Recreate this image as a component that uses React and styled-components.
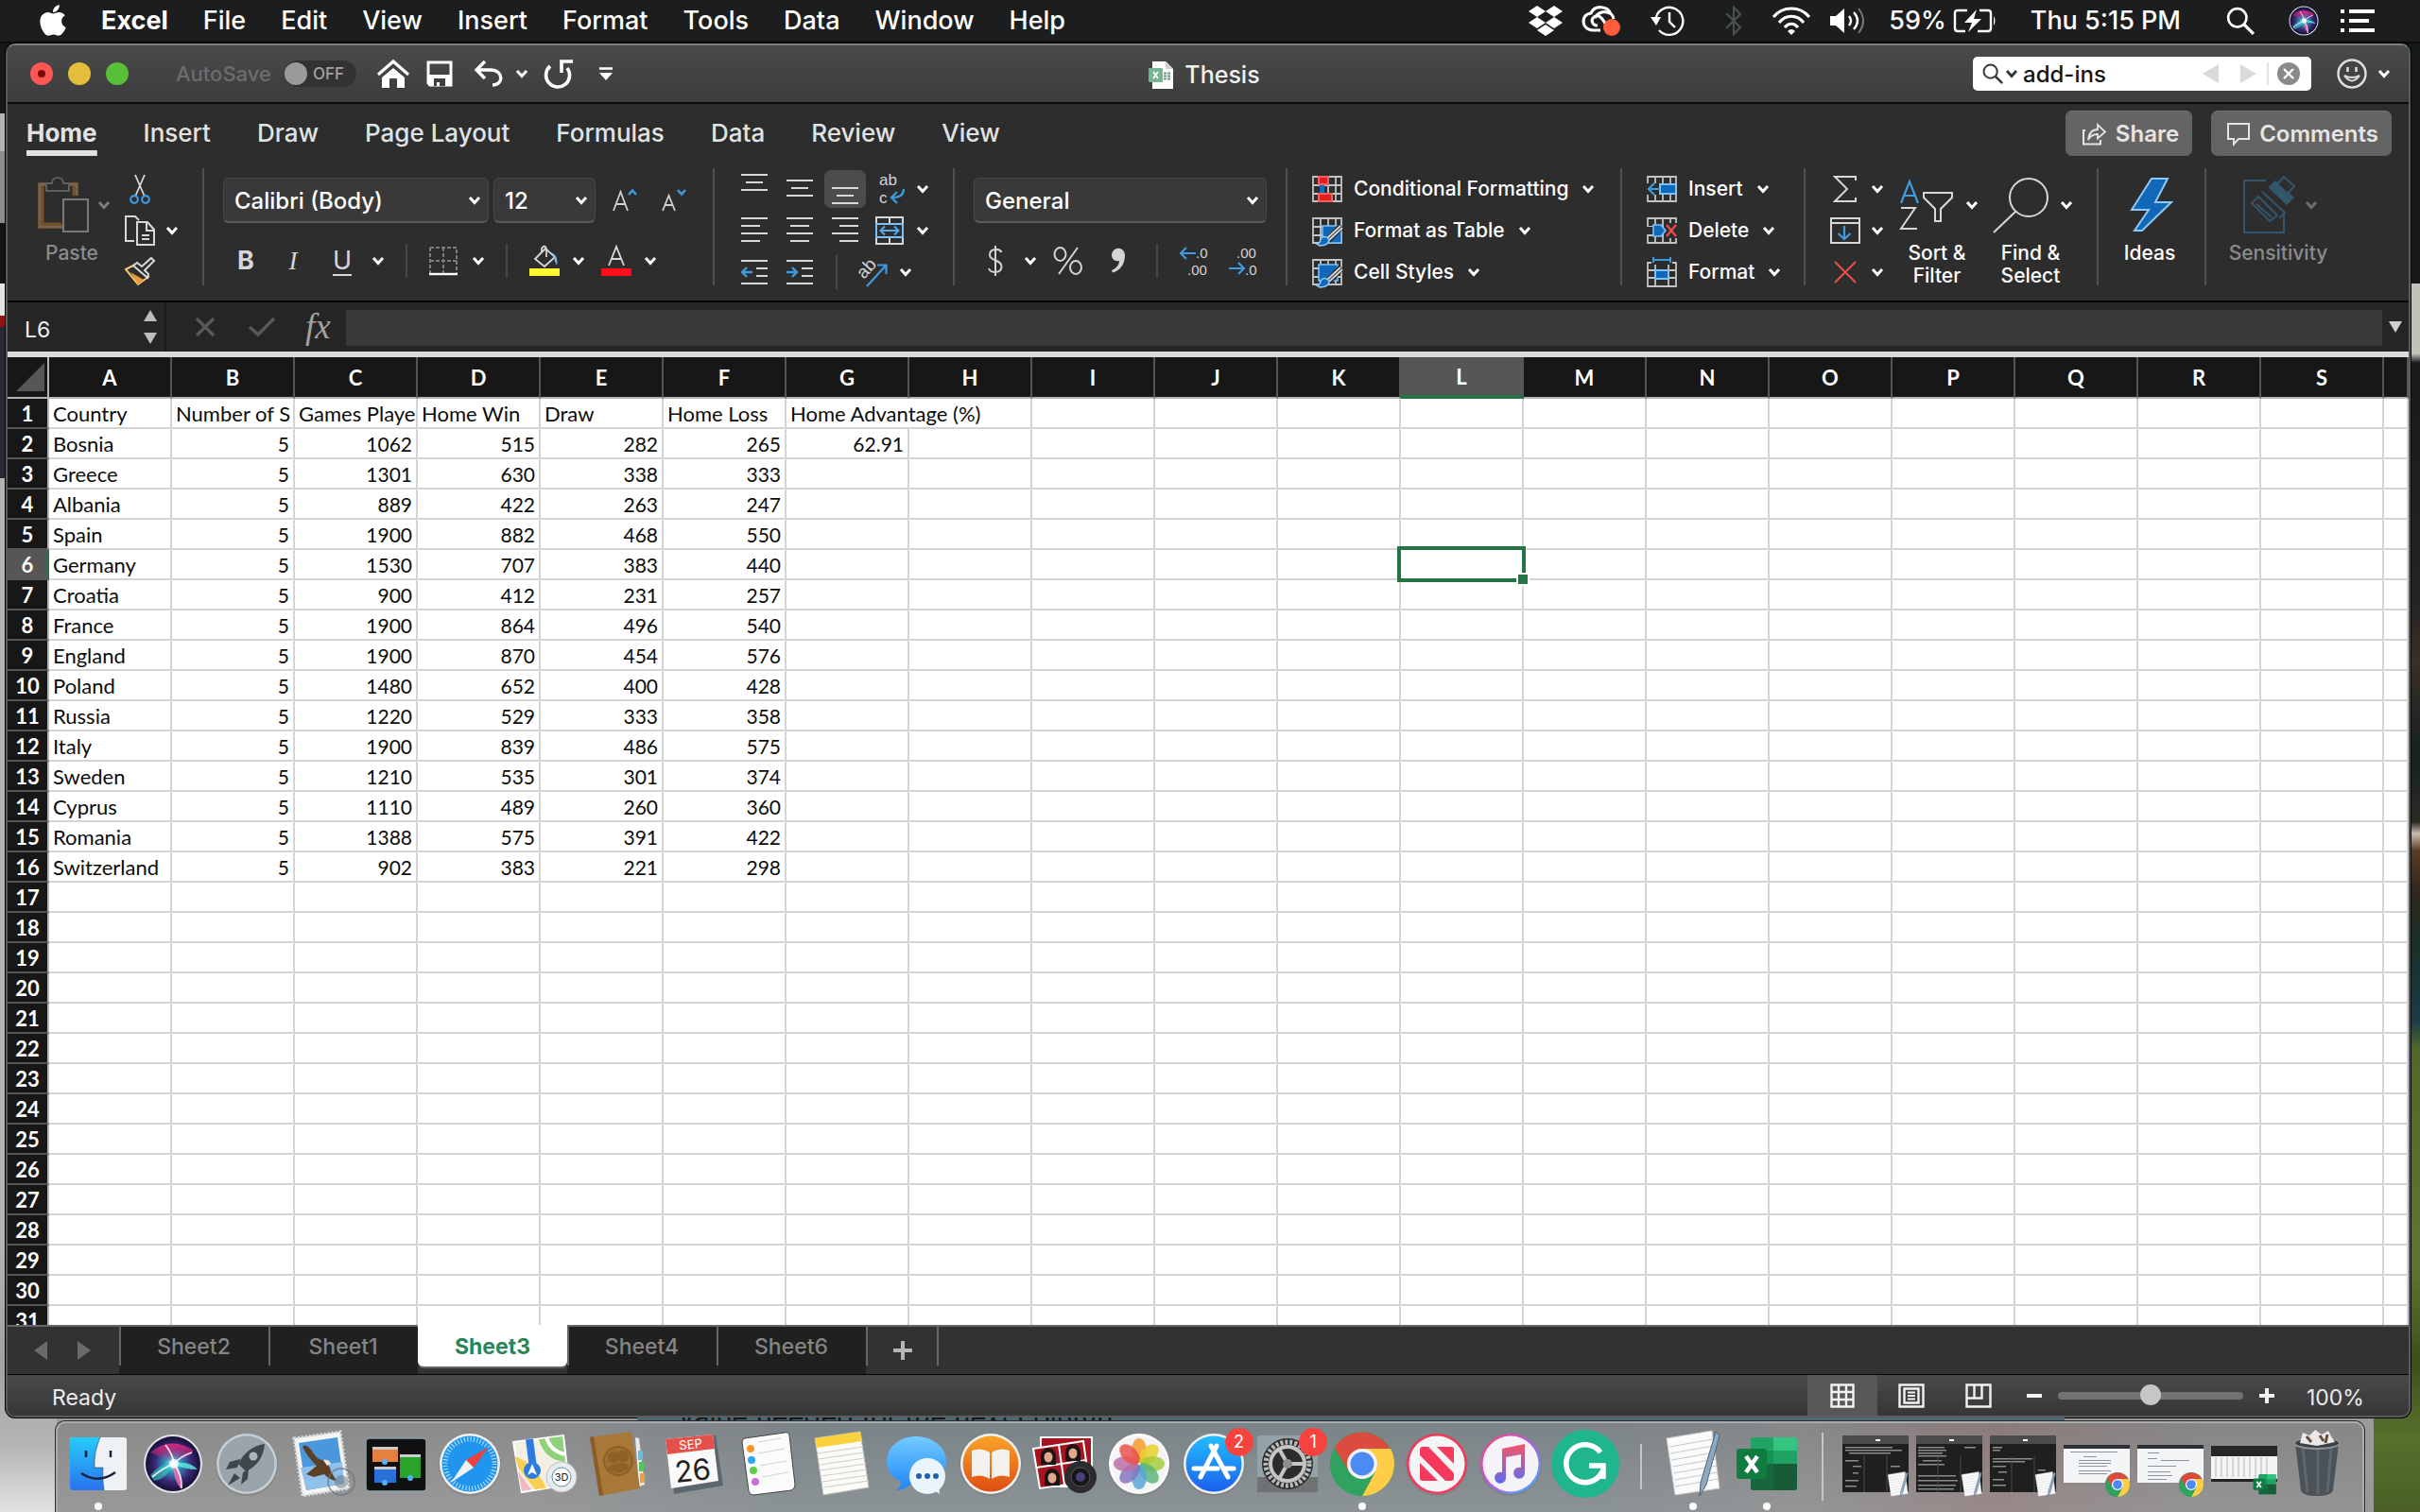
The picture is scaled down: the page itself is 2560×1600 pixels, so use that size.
import React from "react";
import styled, { createGlobalStyle, css } from "styled-components";

/* ---------- base ---------- */

const Global = createGlobalStyle`
  * { box-sizing: border-box; }
  html, body { margin: 0; padding: 0; }
  body {
    font-family: Inter, "Liberation Sans", sans-serif;
    color: #fff;
    background: #1a1d1e;
    overflow: hidden;
  }
  button, input, select {
    font: inherit;
    color: inherit;
    margin: 0;
    padding: 0;
    border: 0;
    background: none;
    outline: 0;
  }
  svg { display: block; flex: none; overflow: visible; }
`;

const Desktop = styled.div`
  display: flex;
  flex-direction: column;
  height: 100vh;
  background:
    linear-gradient(#15191b 0 120px, #b3b3b3 120px 160px, #8d8d8d 160px 236px, #141414 236px 300px, #e4e4e4 300px 334px, #8f1218 334px 346px, #262c31 346px 506px, #b4b4b4 506px 1300px, #a2a2a2 1440px, #b5b5b5 1530px, #e2e2e2 1600px) left / 60px 100% no-repeat,
    linear-gradient(#141818 0 300px, #c4c0bb 300px 374px, #17191a 384px, #262422 640px, #3a2e28 700px, #15211f 800px, #2c2b25 870px, #c9bfae 882px, #5e3d24 900px, #33261d 940px, #183027 1000px, #1c3a4a 1080px, #50682a 1110px, #62752f 1340px, #3f4e1c 1440px, #57702c 1520px, #4a6026 1600px) right / 49px 100% no-repeat,
    #9a9a9a;
`;

/* ---------- menu bar ---------- */

const MenuBar = styled.header`
  display: flex;
  align-items: center;
  justify-content: space-between;
  flex: none;
  height: 46px;
  padding: 0 46px 0 42px;
  background: #1b1d1e;
  border-bottom: 2px solid #0b0d0d;
`;

const MenuList = styled.nav`
  display: flex;
  align-items: center;
  gap: 37px;
  font-size: 27px;
  line-height: 44px;
`;

const MenuItem = styled.button`
  font-weight: ${(p) => (p.$strong ? 700 : 500)};
`;

const StatusItems = styled.div`
  display: flex;
  align-items: center;
  font-size: 27px;
  font-weight: 500;
  line-height: 44px;
`;

const StatusItem = styled.span`
  display: flex;
  align-items: center;
  margin-left: ${(p) => p.$gap || 0}px;
  white-space: nowrap;
`;

/* ---------- window ---------- */

const WindowFrame = styled.main`
  display: flex;
  flex-direction: column;
  flex: 1;
  min-height: 0;
  margin: 0 10px 0 6px;
  border: 2px solid #5c5c5c;
  border-top-color: #7e8080;
  border-radius: 10px;
  overflow: hidden;
  background: #2d2d2d;
  box-shadow: 0 0 0 1px #050505;
`;

const TitleBar = styled.div`
  display: grid;
  grid-template-columns: 1fr auto 1fr;
  align-items: center;
  flex: none;
  height: 62px;
  padding: 0 20px 0 24px;
  background: linear-gradient(#4a4a4a, #3c3c3c);
  border-bottom: 2px solid #0a0a0a;
`;

const TitleLeft = styled.div`
  display: flex;
  align-items: center;
`;

const Lights = styled.div`
  display: flex;
  gap: 16px;
`;

const Light = styled.button`
  display: grid;
  place-items: center;
  width: 24px;
  height: 24px;
  border-radius: 50%;
  background: ${(p) => p.$color};
`;

const LightDot = styled.span`
  width: 8px;
  height: 8px;
  border-radius: 50%;
  background: #7c0a05;
`;

const AutoSave = styled.label`
  display: flex;
  align-items: center;
  gap: 14px;
  width: 191px;
  margin-left: 50px;
  font-size: 22px;
  font-weight: 500;
  color: #6d6d6d;
`;

const Toggle = styled.span`
  display: grid;
  align-items: center;
  width: 78px;
  height: 28px;
  border-radius: 14px;
  background: #323232;
  font-size: 17px;
  color: #a3a3a3;
  & > * { grid-area: 1 / 1; }
`;

const ToggleInput = styled.input`
  appearance: none;
  width: 24px;
  height: 24px;
  border-radius: 50%;
  background: #9a9a9a;
`;

const ToggleText = styled.span`
  margin-left: 30px;
`;

const QuickTools = styled.div`
  display: flex;
  align-items: center;
  margin-left: 22px;
`;

const IconButton = styled.button`
  display: flex;
  align-items: center;
  justify-content: center;
  flex: none;
  gap: ${(p) => p.$gap || 0}px;
  width: ${(p) => (p.$w ? p.$w + "px" : "auto")};
  margin-left: ${(p) => p.$ml || 0}px;
`;

const DocTitle = styled.h1`
  display: flex;
  align-items: center;
  gap: 12px;
  margin: 0;
  padding: 2px 12px 0 0;
  font-size: 25px;
  font-weight: 500;
  line-height: 32px;
  color: #f2f2f2;
`;

const TitleRight = styled.div`
  display: flex;
  align-items: center;
  justify-content: flex-end;
`;

const SearchBox = styled.div`
  display: flex;
  align-items: center;
  width: 358px;
  height: 36px;
  padding: 0 12px 0 10px;
  border-radius: 5px;
  background: #fff;
  color: #141414;
`;

const SearchInput = styled.input`
  flex: 1;
  min-width: 0;
  margin-left: 6px;
  padding-top: 2px;
  font-size: 24px;
  font-weight: 500;
  line-height: 32px;
`;

const SearchRule = styled.span`
  width: 2px;
  height: 24px;
  margin: 0 9px 0 11px;
  background: #e2e2e2;
`;

/* ---------- ribbon ---------- */

const TabRow = styled.div`
  display: flex;
  align-items: center;
  justify-content: space-between;
  flex: none;
  height: 62px;
  padding: 0 18px 0 20px;
`;

const RibbonTabs = styled.nav`
  display: flex;
  gap: 49px;
  font-size: 26px;
  line-height: 36px;
`;

const RibbonTab = styled.button`
  padding: 6px 0 0;
  border-bottom: 6px solid transparent;
  font-weight: ${(p) => (p.$active ? 700 : 500)};
  color: #e2e2e2;
  ${(p) =>
    p.$active &&
    css`
      background: linear-gradient(#e2e0e2, #e2e0e2) bottom / 100% 6px no-repeat border-box;
    `}
`;

const TabActions = styled.div`
  display: flex;
  gap: 20px;
`;

const ActionButton = styled.button`
  display: flex;
  align-items: center;
  gap: 10px;
  height: 48px;
  padding: 0 14px 0 17px;
  border-radius: 7px;
  background: #646464;
  border-top: 1px solid #757575;
  font-size: 24px;
  font-weight: 600;
  color: #e4e4e4;
`;

const Ribbon = styled.div`
  display: flex;
  flex: none;
  height: 148px;
  padding-top: 6px;
  border-bottom: 2px solid #050505;
  font-size: 21px;
  font-weight: 500;
`;

const Group = styled.section`
  display: flex;
  flex: none;
  width: ${(p) => p.$w}px;
  padding-left: ${(p) => p.$pl || 0}px;
  justify-content: ${(p) => (p.$center ? "center" : "flex-start")};
`;

const GroupRule = styled.span`
  flex: none;
  width: 2px;
  height: 124px;
  background: #505050;
`;

const Column = styled.div`
  display: flex;
  flex-direction: column;
  margin-left: ${(p) => p.$ml || 0}px;
`;

const Line = styled.div`
  display: flex;
  align-items: center;
  height: 44px;
`;

const TallColumn = styled.div`
  display: flex;
  flex-direction: column;
  gap: 16px;
  padding-top: 10px;
`;

const TallLine = styled.div`
  display: flex;
  align-items: center;
  height: 48px;
`;

const SmallRule = styled.span`
  width: 2px;
  height: 36px;
  margin-left: ${(p) => p.$ml}px;
  background: #474747;
`;

const BigButton = styled.button`
  display: flex;
  flex-direction: column;
  align-items: center;
  flex: none;
  height: 132px;
  width: ${(p) => p.$w}px;
  margin-left: ${(p) => p.$ml || 0}px;
  line-height: 24px;
  color: ${(p) => (p.$dim ? "#8b8b8b" : "#fff")};
`;

const BigIcon = styled.span`
  display: flex;
  align-items: center;
  gap: ${(p) => p.$gap || 10}px;
  height: 78px;
`;

const BigLabel = styled.span`
  padding-right: 4px;
`;

const TextButton = styled.button`
  display: flex;
  align-items: center;
  gap: 12px;
  height: 44px;
  line-height: 28px;
  white-space: nowrap;
`;

const ButtonText = styled.span`
  margin-right: 3px;
`;

const AlignButton = styled.button`
  display: grid;
  place-items: center;
  width: 44px;
  height: 40px;
  margin: 0 2px;
  border-radius: 7px;
  background: ${(p) => (p.$on ? "#4c4c4c" : "transparent")};
`;

const LetterButton = styled.button`
  width: ${(p) => p.$w}px;
  font-size: 27px;
  line-height: 36px;
  color: #d6d6d6;
  font-weight: ${(p) => (p.$bold ? 700 : 400)};
  font-family: ${(p) => (p.$italic ? '"Liberation Serif", serif' : "inherit")};
  font-style: ${(p) => (p.$italic ? "italic" : "normal")};
  text-decoration: ${(p) => (p.$under ? "underline" : "none")};
  text-underline-offset: 5px;
`;

const SelectWrap = styled.span`
  display: grid;
  align-items: center;
  width: ${(p) => p.$w}px;
  height: 48px;
  margin-right: 5px;
  & > * { grid-area: 1 / 1; }
  & > svg { justify-self: end; margin-right: 9px; pointer-events: none; }
`;

const Select = styled.select`
  appearance: none;
  width: 100%;
  height: 48px;
  padding: 2px 30px 0 11px;
  border: 1px solid #474747;
  border-bottom: 2px solid #5a5a5a;
  border-radius: 6px;
  background: #393939;
  font-size: 24px;
  color: #fff;
`;

/* ---------- formula bar ---------- */

const FormulaBar = styled.div`
  display: flex;
  align-items: stretch;
  flex: none;
  height: 58px;
  background: #252525;
  border-bottom: 6px solid #dcdcdc;
`;

const NameBox = styled.div`
  display: flex;
  align-items: center;
  width: 168px;
  padding: 0 8px 0 18px;
  border-right: 2px solid #1b1b1b;
`;

const NameInput = styled.input`
  flex: 1;
  min-width: 0;
  font-size: 23px;
  padding-top: 6px;
  color: #f0f0f0;
`;

const FxText = styled.span`
  width: 30px;
  margin-left: 32px;
  font-family: "Liberation Serif", serif;
  font-style: italic;
  font-size: 37px;
  line-height: 44px;
  color: #a2a2a2;
`;

const FormulaTools = styled.div`
  display: flex;
  align-items: center;
  width: 190px;
  padding-left: 31px;
`;

const FormulaInput = styled.input`
  flex: 1;
  min-width: 0;
  height: 38px;
  margin-top: 8px;
  padding: 0 8px;
  background: #393939;
`;

const FormulaToggle = styled.button`
  display: grid;
  place-items: center;
  width: 28px;
`;

/* ---------- sheet ---------- */

const SheetArea = styled.div`
  flex: 1;
  min-height: 0;
  overflow: hidden;
  background: #fff;
`;

const Grid = styled.table`
  width: 100%;
  table-layout: fixed;
  border-collapse: separate;
  border-spacing: 0;
  font-family: Lato, "Open Sans", sans-serif;
  font-size: 22px;
  line-height: 28px;
  color: #0c0c0c;
`;

const Col = styled.col`
  width: ${(p) => (p.$w ? p.$w + "px" : "auto")};
`;

const Corner = styled.th`
  height: 44px;
  padding: 0;
  background: #171717;
  border-right: 2px solid #b5b5b5;
  border-bottom: 2px solid #b5b5b5;
  & > svg { margin-left: 9px; }
`;

const ColHead = styled.th`
  height: 44px;
  padding: 2px 0 0;
  font-weight: 700;
  color: #fff;
  background: ${(p) => (p.$on ? "#565656" : "#171717")};
  border-right: 2px solid #565656;
  border-bottom: ${(p) => (p.$on ? "4px solid #257347" : "2px solid #b5b5b5")};
`;

const RowHead = styled.th`
  height: 32px;
  padding: 2px 0 0;
  font-weight: 700;
  color: #fff;
  background: ${(p) => (p.$on ? "#565656" : "#171717")};
  border-right: 2px solid ${(p) => (p.$on ? "#257347" : "#b5b5b5")};
  border-bottom: 2px solid #565656;
`;

const Cell = styled.td`
  position: relative;
  height: 32px;
  padding: 2px ${(p) => (p.$num ? 4 : 0)}px 0 4px;
  border-right: 2px solid #d4d4d4;
  border-bottom: 2px solid #d4d4d4;
  font-size: ${(p) => (p.$num ? 21 : 22)}px;
  text-align: ${(p) => (p.$num ? "right" : "left")};
  white-space: nowrap;
  overflow: ${(p) => (p.$on ? "visible" : "hidden")};
`;

const Selection = styled.span`
  position: absolute;
  z-index: 1;
  inset: -4px;
  border: 4px solid #257347;
`;

const FillHandle = styled.span`
  position: absolute;
  z-index: 2;
  right: -6px;
  bottom: -6px;
  width: 10px;
  height: 10px;
  background: #257347;
  box-shadow: 0 0 0 2px #fff;
`;

/* ---------- sheet tabs and status ---------- */

const SheetTabs = styled.div`
  display: flex;
  flex: none;
  height: 52px;
  border-top: 2px solid #666;
  background: #323232;
`;

const TabNav = styled.div`
  display: flex;
  align-items: center;
  gap: 32px;
  width: 118px;
  padding-left: 28px;
`;

const SheetTab = styled.button`
  display: flex;
  justify-content: center;
  width: 158px;
  height: 50px;
  padding-top: 4px;
  font-size: 23px;
  font-weight: 500;
  line-height: 34px;
  color: #858585;
  background: linear-gradient(#666, #666) left top / 2px 41px no-repeat, #202020;
  ${(p) =>
    p.$active &&
    css`
      height: 44px;
      margin-top: -2px;
      padding-top: 6px;
      border-radius: 0 0 6px 6px;
      background: #fff;
      box-shadow: 0 2px 1px #686868;
      font-weight: 700;
      color: #2a8553;
    `}
`;

const AddTab = styled.button`
  display: grid;
  place-items: center;
  width: 77px;
  height: 50px;
  background:
    linear-gradient(#666, #666) left top / 2px 41px no-repeat,
    linear-gradient(#666, #666) right top / 2px 41px no-repeat;
`;

const StatusBar = styled.footer`
  display: flex;
  align-items: stretch;
  flex: none;
  height: 44px;
  padding: 0 46px 0 47px;
  border-top: 1px solid #050505;
  background: linear-gradient(#494949, #373737);
  font-size: 23px;
  line-height: 48px;
  color: #ececec;
`;

const Ready = styled.span`
  flex: 1;
`;

const ViewButton = styled.button`
  display: grid;
  place-items: center;
  width: ${(p) => (p.$on ? 74 : 71)}px;
  background: ${(p) => (p.$on ? "#575757" : "transparent")};
`;

const ZoomControl = styled.div`
  display: flex;
  align-items: center;
  gap: 17px;
  margin-left: 16px;
`;

const ZoomRange = styled.input`
  appearance: none;
  width: 196px;
  height: 22px;
  &::-webkit-slider-runnable-track {
    height: 8px;
    border-radius: 4px;
    background: #727272;
  }
  &::-webkit-slider-thumb {
    appearance: none;
    width: 22px;
    height: 22px;
    margin-top: -8px;
    border-radius: 50%;
    background: #c6c6c6;
  }
`;

const ZoomText = styled.output`
  width: 62px;
  margin-left: 34px;
  white-space: nowrap;
`;

/* ---------- dock ---------- */

const Behind = styled.div`
  flex: none;
  display: flex;
  align-items: flex-end;
  height: 4px;
  margin: 0 376px 0 674px;
  padding-left: 44px;
  overflow: hidden;
  background: #4b6974;
  font-size: 29px;
  line-height: 10px;
  color: #10181c;
`;

const DockRow = styled.div`
  display: flex;
  justify-content: center;
  flex: none;
  height: 96px;
`;

const Dock = styled.nav`
  display: flex;
  padding: 0 8px 0 4px;
  border: 2px solid #a9abac;
  border-bottom: 0;
  border-radius: 10px 10px 0 0;
  box-shadow: 0 0 0 1px #2c2c2c;
  background:
    linear-gradient(rgba(255, 255, 255, 0), rgba(255, 255, 255, 0.12)),
    linear-gradient(90deg, #8b8b8b 0 20%, #7b8488 32% 66%, #868788 76%, #8b7a7a 84%, #868686 93%);
`;

const DockApps = styled.div`
  display: flex;
  justify-content: space-between;
  width: 1651px;
`;

const DockItem = styled.button`
  position: relative;
  display: flex;
  align-items: flex-start;
  width: 78px;
  height: 94px;
  padding: 7px 3px 0;
`;

const Running = styled.span`
  position: absolute;
  left: 35px;
  bottom: 2px;
  width: 8px;
  height: 8px;
  border-radius: 50%;
  background: #fff;
`;

const Badge = styled.span`
  position: absolute;
  top: 5px;
  right: -3px;
  width: 30px;
  height: 30px;
  border-radius: 50%;
  background: #f7433e;
  font-size: 18px;
  line-height: 30px;
  text-align: center;
`;

const DockRule = styled.span`
  width: 2px;
  height: ${(p) => p.$h}px;
  margin: ${(p) => p.$m};
  background: #c3c6c7;
`;

/* ---------- icons ---------- */

const Svg = ({ w, h, children, ...rest }) => (
  <svg width={w} height={h} viewBox={`0 0 ${w} ${h}`} fill="none" aria-hidden="true" {...rest}>
    {children}
  </svg>
);

const Caret = ({ color = "#fff" }) => (
  <Svg w={12} h={8}>
    <path d="M1 1 L6 6.5 L11 1" stroke={color} strokeWidth="3" />
  </Svg>
);

const Rows = ({ h = 28, lines }) => (
  <Svg w={28} h={h}>
    {lines.map(([x, y, w], i) => (
      <rect key={i} x={x} y={y} width={w} height="2" fill="#d8d8d8" />
    ))}
  </Svg>
);

const Tri = ({ dir, w, h, color }) => {
  const d = {
    up: `0,${h} ${w / 2},0 ${w},${h}`,
    down: `0,0 ${w},0 ${w / 2},${h}`,
    left: `${w},0 0,${h / 2} ${w},${h}`,
    right: `0,0 ${w},${h / 2} 0,${h}`,
  }[dir];
  return (
    <Svg w={w} h={h}>
      <polygon points={d} fill={color} />
    </Svg>
  );
};

const AppleIcon = () => (
  <svg width="28" height="34" viewBox="0 0 384 470" fill="#fff" aria-hidden="true">
    <path d="M318.7 240c-.2-36.7 16.4-64.4 50-84.8-18.8-26.9-47.2-41.7-84.7-44.6-35.500-2.800-74.300 20.700-88.500 20.700-15 0-49.400-19.700-76.400-19.700C63.300 112.500 4 156.400 4 245.800q0 39.600 14.400 81.200c12.800 36.700 59 126.700 107.200 125.200 25.200-.6 43-17.900 75.800-17.900 31.800 0 48.300 17.900 76.400 17.900 48.600-.7 90.400-82.500 102.600-119.300-65.200-30.700-61.700-90-61.700-92.900zM262 75.500c27.300-32.400 24.800-61.900 24-72.500-24.100 1.400-52 16.400-67.900 34.900-17.500 19.800-27.800 44.300-25.600 71.900 26.100 2 49.900-11.400 69.500-34.300z" />
  </svg>
);

const DropboxIcon = () => (
  <Svg w={36} h={32}>
    <path d="M9 0l9 6-9 6-9-6zM27 0l9 6-9 6-9-6zM9 12l9 6-9 6-9-6zM27 12l9 6-9 6-9-6zM18 20l9 6-9 6-9-6z" fill="#fff" />
  </Svg>
);

const CloudIcon = () => (
  <Svg w={42} h={32}>
    <path d="M20 26H12C-1 25 -1 9 10 8C14 -1 28 0 31 9" stroke="#fff" strokeWidth="3.200" />
    <path d="M17 21C9 21 9 10 18 11C22 12 25 19 27 22M14 13C20 3 33 6 34 14" stroke="#fff" strokeWidth="3.200" />
    <circle cx="32" cy="23" r="9" fill="#ff5d3a" />
  </Svg>
);

const TimeMachineIcon = () => (
  <Svg w={38} h={32}>
    <path d="M6 12 A14.500 14.500 0 1 1 9 26" stroke="#fff" strokeWidth="2.400" />
    <path d="M0 12 h11 l-5 9z" fill="#fff" />
    <path d="M20 7 V17 L26 23" stroke="#fff" strokeWidth="2.400" />
  </Svg>
);

const BluetoothIcon = () => (
  <Svg w={20} h={32}>
    <path d="M2 8 L17 23 L10 30 V2 L17 9 L2 24" stroke="#4c4f50" strokeWidth="2.200" />
  </Svg>
);

const WifiIcon = () => (
  <Svg w={42} h={30}>
    <path d="M2 11 C12 -1 30 -1 40 11 M8 17 C15 8 27 8 34 17 M14 22 C18 17 24 17 28 22" stroke="#fff" strokeWidth="3.200" />
    <path d="M17 26 q4 -4 8 0 l-4 4z" fill="#fff" />
  </Svg>
);

const VolumeIcon = () => (
  <Svg w={36} h={28}>
    <path d="M0 9h6l9-8v26l-9-8H0z" fill="#fff" />
    <path d="M20 9 q4 5 0 10 M25 5 q8 9 0 18" stroke="#fff" strokeWidth="2.400" />
    <path d="M30 1 q10 13 0 26" stroke="#777" strokeWidth="2" />
  </Svg>
);

const BatteryIcon = () => (
  <Svg w={46} h={26}>
    <path d="M15 2H5q-3 0-3 3v16q0 3 3 3h8M28 2h9q3 0 3 3v16q0 3-3 3H26" stroke="#fff" strokeWidth="2.400" />
    <path d="M43 8q3 5 0 10z" fill="#fff" />
    <path d="M25 1 L12 15h8l-4 10 14-14h-8z" fill="#fff" />
  </Svg>
);

const SearchIcon = ({ s, color, width }) => (
  <svg width={s} height={s} viewBox="0 0 28 28" fill="none" aria-hidden="true">
    <circle cx="11" cy="11" r="9" stroke={color} strokeWidth={width} />
    <path d="M17.500 17.500 L27 27" stroke={color} strokeWidth={width + 0.600} />
  </svg>
);

const SiriOrb = ({ s, rim = 2 }) => (
  <svg width={s} height={s} viewBox="0 0 64 64" aria-hidden="true">
    <defs>
      <radialGradient id="siriBase">
        <stop offset="0" stopColor="#b8fff8" />
        <stop offset="0.300" stopColor="#2f93b9" />
        <stop offset="0.650" stopColor="#3b2a78" />
        <stop offset="1" stopColor="#150f34" />
      </radialGradient>
      <linearGradient id="siriPink" x1="0" y1="0" x2="0" y2="1">
        <stop offset="0" stopColor="#d6287f" />
        <stop offset="1" stopColor="#d6287f" stopOpacity="0" />
      </linearGradient>
    </defs>
    <circle cx="32" cy="32" r="31" fill="#dfe2e6" />
    <circle cx="32" cy="32" r={31 - rim} fill="url(#siriBase)" />
    <path d="M8 20 Q30 2 54 18 Q44 30 32 32 Q18 24 8 20z" fill="url(#siriPink)" />
    <path d="M8 44 Q20 30 32 32 Q26 48 12 50z" fill="#35d3c4" opacity="0.600" />
    <path d="M32 32 Q48 28 58 38 Q44 38 32 32z" fill="#5bf0e2" opacity="0.800" />
    <path d="M32 32 Q44 44 40 58 Q32 48 32 32z" fill="#ff6db4" opacity="0.800" />
    <path d="M24 12 Q32 22 33 32 Q40 24 52 20 M33 32 Q22 36 10 46 M33 32 Q42 44 41 58" stroke="#fff" strokeWidth="1.800" fill="none" opacity="0.850" />
    <circle cx="33" cy="32" r="5" fill="#fff" opacity="0.800" />
  </svg>
);

const ListIcon = () => (
  <Svg w={38} h={24}>
    <path d="M0 2h4M0 12h4M0 22h4M9 2h27M9 12h21M9 22h27" stroke="#fff" strokeWidth="4" />
  </Svg>
);

const HomeIcon = () => (
  <Svg w={34} h={30}>
    <path d="M1 16 L17 2 L33 16" stroke="#fff" strokeWidth="3.200" />
    <path d="M17 9 L29 19 V30 H21 V20 H13 V30 H5 V19z" fill="#fff" />
  </Svg>
);

const SaveIcon = () => (
  <Svg w={28} h={28}>
    <path d="M2 2 H26 V26 H4 L2 24z" stroke="#fff" strokeWidth="3" />
    <path d="M2 15h24v12H2z" fill="#fff" />
    <path d="M8 19h12v8h-6v-4h-3v4H8z" fill="#3f3f3f" />
  </Svg>
);

const UndoIcon = () => (
  <Svg w={32} h={28}>
    <path d="M12 1 L3 10 L12 19 M3 10 H18 C32 10 32 26 20 26" stroke="#fff" strokeWidth="3.400" />
  </Svg>
);

const RedoIcon = () => (
  <Svg w={32} h={30}>
    <path d="M7 7 A12.500 12.500 0 1 0 25 9" stroke="#fff" strokeWidth="3.600" />
    <path d="M31 2 H19 V14" stroke="#fff" strokeWidth="3.600" />
  </Svg>
);

const CustomizeIcon = () => (
  <Svg w={14} h={14}>
    <path d="M0 1.500h14" stroke="#fff" strokeWidth="2.500" />
    <path d="M0 6h14l-7 8z" fill="#fff" />
  </Svg>
);

const DocIcon = () => (
  <Svg w={26} h={29}>
    <path d="M4 0H18L26 8V29H4z" fill="#fff" />
    <path d="M18 0V8H26z" fill="#cfd6d2" />
    <rect y="7" width="15" height="15" rx="1" fill="#74b591" />
    <path d="M5 11 L10 18 M10 11 L5 18" stroke="#fff" strokeWidth="1.800" />
    <path d="M16 12.500h7M16 15.500h7M16 18.500h7" stroke="#5c9c7a" strokeWidth="2" strokeDasharray="3 1" />
  </Svg>
);

const SmileIcon = () => (
  <Svg w={32} h={32}>
    <circle cx="16" cy="16" r="14.500" stroke="#dcdcdc" strokeWidth="2.500" />
    <path d="M11.500 9v5M20.500 9v5" stroke="#dcdcdc" strokeWidth="2.600" />
    <path d="M8 18 q8 11 16 0 q-8 4 -16 0z" stroke="#dcdcdc" strokeWidth="2" />
  </Svg>
);

const ClearIcon = () => (
  <Svg w={24} h={24}>
    <circle cx="12" cy="12" r="12" fill="#8a8a8a" />
    <path d="M7 7l10 10M17 7L7 17" stroke="#fff" strokeWidth="2.400" />
  </Svg>
);

const ShareIcon = () => (
  <Svg w={26} h={24}>
    <path d="M4 8H2V22.500H20V18" stroke="#e4e4e4" strokeWidth="2" />
    <path d="M7 18 C8 10 12 7 17 7 V2 L25 9.500 L17 16.500 V12 C12 12 9 14 7 18z" stroke="#e4e4e4" strokeWidth="1.800" />
  </Svg>
);

const CommentIcon = () => (
  <Svg w={24} h={24}>
    <path d="M1 1H23V17H12L7 22.500V17H1z" stroke="#e4e4e4" strokeWidth="2" />
  </Svg>
);

const PasteIcon = () => (
  <Svg w={54} h={60}>
    <path d="M8 8H2V53H27M34 8H41V20" stroke="#7d6248" strokeWidth="3.400" />
    <path d="M5 10V50H25M38 10V20" stroke="#76502a" strokeWidth="3" />
    <path d="M9 15V7H15C15 -1 27 -1 27 7H33V15z" stroke="#5f5f5f" strokeWidth="2" />
    <rect x="27" y="24" width="26" height="34" stroke="#7a7a7a" strokeWidth="2" />
  </Svg>
);

const CutIcon = () => (
  <Svg w={32} h={32}>
    <path d="M11 1 L21 24 M21 1 L11 24" stroke="#d8d8d8" strokeWidth="1.800" />
    <circle cx="10" cy="27" r="3.800" stroke="#3f9ade" strokeWidth="2.200" />
    <circle cx="22" cy="27" r="3.800" stroke="#3f9ade" strokeWidth="2.200" />
  </Svg>
);

const CopyIcon = () => (
  <Svg w={32} h={32}>
    <path d="M10 27H1V1H11L15 5" stroke="#d8d8d8" strokeWidth="2" />
    <path d="M13 7H24L31 15V31H13z M23 7V16H31 M18 21h8M18 25h8" stroke="#d8d8d8" strokeWidth="2" />
  </Svg>
);

const PainterIcon = () => (
  <Svg w={32} h={32}>
    <path d="M1 13 L11 8 L25 21 L14 29z" stroke="#f3c77b" strokeWidth="2" />
    <path d="M6 16 L20 24 L14 29z" fill="#e89a3c" />
    <path d="M9 9 L13 6 L18 10 L28 1 L31 4 L21 14 L25 18 L24 22z" stroke="#d8d8d8" strokeWidth="2" fill="#2d2d2d" />
  </Svg>
);

const SizeIcon = ({ up }) => (
  <Svg w={26} h={24}>
    {up ? (
      <path d="M1 23 L8.500 3 L16 23 M4 16H13" stroke="#d0d0d0" strokeWidth="1.800" />
    ) : (
      <path d="M1 23 L7.500 7 L14 23 M4 17H12" stroke="#d0d0d0" strokeWidth="1.800" />
    )}
    <path d={up ? "M17 6 L21 1.500 L25 6" : "M17 1 L21 5.500 L25 1"} stroke="#3f9ade" strokeWidth="2.600" />
  </Svg>
);

const BordersIcon = () => (
  <Svg w={30} h={30}>
    <path d="M1 1H29V28M1 1V28M15 1V28M1 15H29" stroke="#7c7c7c" strokeWidth="2" strokeDasharray="4 2" />
    <path d="M0 29H30" stroke="#fff" strokeWidth="2.400" />
  </Svg>
);

const FillIcon = () => (
  <Svg w={32} h={32}>
    <path d="M6 14 L17 3 L27 12 L16 22z M13 8 V3 Q16 -2 18 3 V12" stroke="#d8d8d8" strokeWidth="1.800" />
    <path d="M22 7 Q31 9 29 21 Q26 16 26 11z" fill="#7db8ea" />
    <rect y="24" width="32" height="8" fill="#fdf734" />
  </Svg>
);

const FontColorIcon = () => (
  <Svg w={32} h={32}>
    <path d="M8 21 L16 1 L24 21 M11 14H21" stroke="#d8d8d8" strokeWidth="1.800" />
    <rect y="24" width="32" height="8" fill="#fb0d1b" />
  </Svg>
);

const IconLabel = styled.text`
  font-family: "Liberation Sans", sans-serif;
  font-size: ${(p) => p.$s || 15}px;
  font-weight: 400;
  fill: #d4d4d4;
`;

const WrapIcon = () => (
  <Svg w={28} h={32}>
    <IconLabel x="0" y="12" $s={17}>ab</IconLabel>
    <IconLabel x="0" y="31" $s={17}>c</IconLabel>
    <path d="M26 16 Q26 25 14 25 M19 19 L13 25 L19 31" stroke="#3f9ade" strokeWidth="2.200" />
  </Svg>
);

const MergeIcon = () => (
  <Svg w={30} h={30}>
    <path d="M1 1H29V29H1z M15 1V8M15 22V29" stroke="#d8d8d8" strokeWidth="2" />
    <path d="M1 8H29V22H1z" stroke="#7cc0f5" strokeWidth="2" />
    <path d="M6 15H24 M10 10.500L5.500 15L10 19.500M20 10.500L24.500 15L20 19.500" stroke="#58a9ea" strokeWidth="2" />
  </Svg>
);

const OrientIcon = () => (
  <Svg w={34} h={32}>
    <IconLabel x="0" y="0" $s={19} transform="translate(8 24) rotate(-48)">ab</IconLabel>
    <path d="M11 31 L31 9 M22 8.500H31.500V18" stroke="#3f9ade" strokeWidth="2.200" />
  </Svg>
);

const DollarIcon = () => (
  <Svg w={16} h={32}>
    <path d="M8 0V32M14.500 7 C12 2.500 2 2.500 2 9.500 C2 17 14.500 14 14.500 22 C14.500 29.500 3 29.500 1 24" stroke="#d4d4d4" strokeWidth="2" />
  </Svg>
);

const PercentIcon = () => (
  <Svg w={32} h={30}>
    <ellipse cx="7.500" cy="8" rx="6" ry="7" stroke="#d4d4d4" strokeWidth="2" />
    <ellipse cx="24" cy="22" rx="6" ry="7" stroke="#d4d4d4" strokeWidth="2" />
    <path d="M26 1 L6 29" stroke="#d4d4d4" strokeWidth="2" />
  </Svg>
);

const CommaIcon = () => (
  <Svg w={14} h={26}>
    <path d="M0 6.500 A7 7 0 0 1 14 7 C14 17 9 23 1 25.500 L0 23 C5 21 8 17 8 13 C3 14 0 11 0 6.500z" fill="#d4d4d4" />
  </Svg>
);

const DecimalIcon = ({ more }) => (
  <Svg w={30} h={34}>
    {more ? (
      <>
        <IconLabel x="17" y="14">.0</IconLabel>
        <IconLabel x="8" y="32">.00</IconLabel>
        <path d="M17 9H1M7 3L1 9L7 15" stroke="#3f9ade" strokeWidth="2.200" />
      </>
    ) : (
      <>
        <IconLabel x="8" y="14">.00</IconLabel>
        <IconLabel x="17" y="32">.0</IconLabel>
        <path d="M0 25H16M10 19L16 25L10 31" stroke="#3f9ade" strokeWidth="2.200" />
      </>
    )}
  </Svg>
);

const TableBase = () => (
  <path d="M1 1H31V27H1z M1 10H31M1 19H31M9 1V27M17 1V27M25 1V27" stroke="#c4c4c4" strokeWidth="1.800" />
);

const CondIcon = () => (
  <Svg w={32} h={28}>
    <TableBase />
    <rect x="7" y="1" width="10" height="8" fill="#e02020" stroke="#f0605c" strokeWidth="2" />
    <rect x="8" y="10" width="5" height="8" fill="#1167b8" />
    <rect x="7" y="19" width="14" height="8" fill="#e02020" stroke="#f0605c" strokeWidth="2" />
  </Svg>
);

const Brush = () => (
  <>
    <path d="M31 9 L17 24" stroke="#2d2d2d" strokeWidth="7" />
    <path d="M31 10 L17 23" stroke="#e4e4e4" strokeWidth="4.500" />
    <path d="M31 10 L17 23" stroke="#555" strokeWidth="1.500" />
    <path d="M5 28 Q9 27 9 23 Q13 18 18 23 Q18 30 8 30z" fill="#1167b8" stroke="#8fc8f5" strokeWidth="1.600" />
  </>
);

const FormatTableIcon = () => (
  <Svg w={32} h={28}>
    <TableBase />
    <path d="M11 9H31V27H11z" fill="#1167b8" stroke="#7cc0f5" strokeWidth="1.600" />
    <Brush />
  </Svg>
);

const CellStylesIcon = () => (
  <Svg w={32} h={28}>
    <TableBase />
    <path d="M7 6H27V23H7z" fill="#1167b8" stroke="#7cc0f5" strokeWidth="1.600" />
    <Brush />
  </Svg>
);

const InsertIcon = () => (
  <Svg w={32} h={28}>
    <TableBase />
    <rect x="0" y="8" width="16" height="12" fill="#2d2d2d" />
    <rect x="14" y="9" width="17" height="10" fill="#1167b8" stroke="#7cc0f5" strokeWidth="2" />
    <path d="M14 14H2M8 8L2 14L8 20" stroke="#3f9ade" strokeWidth="2.200" />
  </Svg>
);

const DeleteIcon = () => (
  <Svg w={32} h={28}>
    <TableBase />
    <rect x="0" y="10" width="7" height="8" fill="#2d2d2d" />
    <rect x="18" y="6" width="14" height="16" fill="#2d2d2d" />
    <path d="M7 8H15L20 14L15 20H7z" fill="#1167b8" stroke="#7cc0f5" strokeWidth="1.600" />
    <path d="M21 8L31 20M31 8L21 20" stroke="#ef4e50" strokeWidth="2.200" />
  </Svg>
);

const FormatIcon = () => (
  <Svg w={32} h={32}>
    <path d="M5 6H1V31H31V6H27M1 14H31M1 22H31M9 8V31M23 8V31" stroke="#c4c4c4" strokeWidth="1.800" />
    <rect x="9" y="14" width="14" height="9" fill="#1167b8" stroke="#7cc0f5" strokeWidth="2" />
    <path d="M7 0V6M25 0V6M7 3H25" stroke="#3f9ade" strokeWidth="2" />
  </Svg>
);

const SigmaIcon = () => (
  <Svg w={32} h={28}>
    <path d="M27 5V1H5L18 14L5 27H27V23" stroke="#d8d8d8" strokeWidth="2" />
  </Svg>
);

const FillDownIcon = () => (
  <Svg w={32} h={28}>
    <path d="M1 1H31V27H1zM1 6H31" stroke="#d8d8d8" strokeWidth="2" />
    <path d="M15 9V23M8.500 17L15 23L21.500 17" stroke="#3f9ade" strokeWidth="2.200" />
  </Svg>
);

const ClearXIcon = () => (
  <Svg w={32} h={24}>
    <path d="M5 1L27 23M27 1L5 23" stroke="#ef4e50" strokeWidth="2" />
  </Svg>
);

const SortIcon = () => (
  <Svg w={56} h={54}>
    <path d="M1 25 L10 2 L19 25 M4 17H16" stroke="#3f9ade" strokeWidth="2.200" />
    <path d="M1 30H16L1 52H18" stroke="#d8d8d8" strokeWidth="2" />
    <path d="M25 14H55V19L43 31V44H37V31L25 19z" stroke="#d8d8d8" strokeWidth="2" />
  </Svg>
);

const FindIcon = () => (
  <Svg w={60} h={60}>
    <circle cx="38" cy="22" r="20" stroke="#d8d8d8" strokeWidth="2" />
    <path d="M24 37L1 59" stroke="#d8d8d8" strokeWidth="2" />
  </Svg>
);

const IdeasIcon = () => (
  <Svg w={44} h={58}>
    <path d="M22 1H39L26 26H43L12 56H4L19 34H1z" fill="#1167b8" stroke="#8fc8f5" strokeWidth="2" />
  </Svg>
);

const SensIcon = () => (
  <Svg w={56} h={62}>
    <path d="M24 5H1V60H43V38" stroke="#34566d" strokeWidth="2" />
    <path d="M9 29L16 22L36 42L28 48z M14 30L30 44" stroke="#34566d" strokeWidth="2" />
    <path d="M26 12L34 5L54 23L46 31z" fill="#34566d" />
    <path d="M36 9L43 1L54 11L47 19z" stroke="#34566d" strokeWidth="2" fill="#2d2d2d" />
    <path d="M20 17L44 39L38 45" stroke="#34566d" strokeWidth="2" />
  </Svg>
);

const GridViewIcon = () => (
  <Svg w={26} h={26}>
    <path d="M1.500 1.500H24.500V24.500H1.500zM1.500 9H24.500M1.500 17H24.500M9 1.500V24.500M17 1.500V24.500" stroke="#f2f2f2" strokeWidth="2.400" />
  </Svg>
);

const PageViewIcon = () => (
  <Svg w={28} h={26}>
    <path d="M1.500 1.500H26.500V24.500H1.500zM6.500 5.500H21.500V20.500H6.500z" stroke="#f2f2f2" strokeWidth="2.400" />
    <path d="M10 9.500H18M10 13H18M10 16.500H18" stroke="#f2f2f2" strokeWidth="2" />
  </Svg>
);

const BreakViewIcon = () => (
  <Svg w={28} h={26}>
    <path d="M1.500 1.500H26.500V24.500H1.500zM1.500 15.500H17.500V1.500M9.500 1.500V15.500" stroke="#f2f2f2" strokeWidth="2.400" />
  </Svg>
);

const PlusMark = ({ s, w, color }) => (
  <Svg w={s} h={s}>
    <path d={`M0 ${s / 2}H${s}M${s / 2} 0V${s}`} stroke={color} strokeWidth={w} />
  </Svg>
);

/* ---------- dock art, all on a 72 by 72 board ---------- */

const Art = ({ children }) => <Svg w={72} h={72}>{children}</Svg>;

const Disc = ({ fill, rim = "#f1f1f1" }) => (
  <>
    <circle cx="36" cy="37" r="33" fill="#777" opacity="0.500" />
    <circle cx="36" cy="36" r="32" fill={rim} />
    <circle cx="36" cy="36" r="29.500" fill={fill} />
  </>
);

const ChromeMark = ({ x = 36, y = 36, r = 34 }) => {
  const k = r / 34;
  return (
    <g transform={`translate(${x} ${y}) scale(${k})`}>
      <circle r="34" fill="#2fa35f" />
      <path d="M0 -16 H30 A34 34 0 0 1 0 34 L14 8z" fill="#ffcd46" />
      <path d="M-29.400 -17 A34 34 0 0 0 0 34 L14 8 L-14 8z" fill="#2fa35f" />
      <path d="M-29.400 -17 A34 34 0 0 1 29.400 -16 H0 L-14 8z" fill="#dc4b3f" />
      <circle r="16" fill="#f5f5f5" />
      <circle r="12.500" fill="#4c8bf5" />
    </g>
  );
};

const ExcelMark = ({ x = 0, y = 0, k = 1 }) => (
  <g transform={`translate(${x} ${y}) scale(${k})`}>
    <rect x="19" y="8" width="49" height="56" rx="3" fill="#21a366" />
    <path d="M43 8H65q3 0 3 3V22H43z" fill="#33c481" />
    <path d="M19 22H43V36H19z" fill="#169154" />
    <path d="M43 36H68V61q0 3-3 3H43z" fill="#185c37" />
    <path d="M19 36H43V64H22q-3 0-3-3z" fill="#17663d" />
    <rect x="4" y="20" width="32" height="32" rx="3" fill="#107c41" />
    <path d="M14 28L26 45M26 28L14 45" stroke="#fff" strokeWidth="4.500" />
  </g>
);

const PaperMark = ({ x = 0, y = 0, k = 1 }) => (
  <g transform={`translate(${x} ${y}) scale(${k})`}>
    <path d="M8 9L56 1L64 62L17 69z" fill="#fbfbfb" stroke="#c9c9c9" />
    <path d="M11 18L57 10M12 25L58 17M13 32L59 24M14 39L60 31M15 46L61 38M16 53L62 45M17 60L63 52" stroke="#c3c8cc" strokeWidth="1" />
    <path d="M60 2L64 6L50 58L43 70L44 56z" fill="#8fa9c1" stroke="#4d6377" strokeWidth="1" />
  </g>
);

const Finder = () => (
  <Art>
    <defs>
      <linearGradient id="finderA" x1="0" y1="0" x2="0" y2="1"><stop offset="0" stopColor="#25cdf9" /><stop offset="1" stopColor="#2b72f0" /></linearGradient>
    </defs>
    <rect x="6" y="8" width="60" height="56" rx="3" fill="#eef2f6" />
    <path d="M9 8H38Q31 24 32 40H41Q40 52 42 64H9q-3 0-3-3V11q0-3 3-3z" fill="url(#finderA)" />
    <path d="M38 8Q31 24 32 40H41Q40 52 42 64" stroke="#16243a" strokeWidth="1" opacity="0.500" />
    <path d="M23 22V29M49 22V29" stroke="#16243a" strokeWidth="2.500" />
    <path d="M18 46Q36 58 54 45" stroke="#16243a" strokeWidth="2.500" />
  </Art>
);

const Launchpad = () => (
  <Art>
    <Disc fill="#9aa5ab" rim="#c4ced3" />
    <path d="M55 15Q36 18 27 36L35 44Q53 36 55 15z" fill="#3f474b" />
    <circle cx="43" cy="28" r="4.500" fill="#aab6bb" />
    <path d="M29 31L18 34L14 42L26 40zM38 42L37 52L30 58L32 45zM23 46L16 59L29 51z" fill="#3f474b" />
  </Art>
);

const Mail = () => (
  <Art>
    <path d="M7 9L56 2L65 62L16 70z" fill="#f6f6f6" stroke="#d9dde0" strokeWidth="3" strokeDasharray="2 2" />
    <path d="M12 14L53 8L60 57L20 64z" fill="#4b97dc" />
    <path d="M14 40L58 34L60 57L20 64z" fill="#8fc0ea" />
    <path d="M16 18Q20 13 27 24Q31 31 37 32Q44 34 46 44L52 54Q44 53 39 47L28 50L20 47L31 38Q22 30 16 18z" fill="#5c4026" />
    <path d="M38 32Q44 31 46 36L42 38z" fill="#f1e8d8" />
    <circle cx="57" cy="55" r="14" stroke="#64727c" strokeWidth="2" opacity="0.600" />
    <circle cx="57" cy="55" r="7" fill="#64727c" opacity="0.500" />
  </Art>
);

const Mission = () => (
  <Art>
    <rect x="4" y="9" width="64" height="56" rx="4" fill="#111" stroke="#8ea0a8" strokeWidth="1.500" />
    <path d="M11 18H38V34H11z" fill="#e58140" /><path d="M11 18H38V21H11zM13 39H36V42H13zM40 26H62V29H40z" fill="#ccc" />
    <path d="M13 42H36V56H13z" fill="#2b6fd8" /><path d="M40 29H62V51H40z" fill="#28a42c" />
    <circle cx="24" cy="34" r="3" fill="#4fb2ff" /><circle cx="51" cy="51" r="3" fill="#4fb2ff" /><circle cx="24" cy="56" r="3" fill="#4fb2ff" />
  </Art>
);

const Safari = () => (
  <Art>
    <Disc fill="#1f95ee" />
    <circle cx="36" cy="36" r="26" stroke="#c7e6fb" strokeWidth="5" strokeDasharray="1 2.400" />
    <path d="M56 18L40 40L32 32z" fill="#f0413a" />
    <path d="M16 56L40 40L32 32z" fill="#eef2f4" />
  </Art>
);

const Maps = () => (
  <Art>
    <path d="M3 13L56 6L62 58L12 66z" fill="#f3efe2" stroke="#fff" strokeWidth="2" />
    <path d="M30 10L55 7L58 34Q36 32 30 10z" fill="#8fd07a" />
    <path d="M38 8Q42 22 57 26" stroke="#fff" strokeWidth="4" />
    <path d="M5 28Q26 36 38 62L26 63L8 40z" fill="#f7cf52" />
    <path d="M8 44L22 63L12 65z" fill="#f0b9c2" />
    <path d="M20 10L24 40" stroke="#2c7be0" strokeWidth="8" />
    <circle cx="23" cy="43" r="9" fill="#2c7be0" /><path d="M23 36L28 48L23 45L18 48z" fill="#fff" />
    <circle cx="54" cy="50" r="16" fill="#e9ebee" stroke="#bfc3c8" />
    <circle cx="54" cy="50" r="10" fill="#fff" stroke="#5b93a4" />
    <text x="54" y="54" fontSize="11" textAnchor="middle" fill="#222">3D</text>
  </Art>
);

const Contacts = () => (
  <Art>
    <path d="M54 8L58 9L64 58L58 60z" fill="#e9e9e9" /><path d="M57 22h5v10h-5z" fill="#5fc1e4" /><path d="M58 34h5v10h-5z" fill="#59c360" /><path d="M59 46h5v10h-5z" fill="#eea03c" />
    <path d="M6 8L50 2L59 62L16 70z" fill="#a87838" /><path d="M6 8L10 7L20 69L16 70z" fill="#8a5d26" />
    <circle cx="36" cy="33" r="15" fill="#9d6f31" stroke="#8c6026" strokeWidth="2" />
    <circle cx="31" cy="29" r="6" fill="#8c6026" /><circle cx="41" cy="28" r="6" fill="#8c6026" /><path d="M24 41Q36 30 48 39Q38 50 24 41z" fill="#8c6026" />
  </Art>
);

const Calendar = () => (
  <Art>
    <path d="M10 12L60 6L68 59L16 68z" fill="#5b676f" />
    <path d="M7 10L57 5L63 54L13 62z" fill="#fafafa" /><path d="M7 10L57 5L59 20L9 26z" fill="#e5504b" />
    <text transform="translate(34 20) rotate(-6)" fontSize="13" textAnchor="middle" fill="#fff">SEP</text>
    <text transform="translate(37 54) rotate(-6)" fontSize="31" textAnchor="middle" fill="#222">26</text>
  </Art>
);

const Reminders = () => (
  <Art>
    <path d="M12 9L54 3Q58 2 59 6L65 58Q65 63 61 64L21 69Q17 69 16 65L9 13Q9 10 12 9z" fill="#fbfbfb" stroke="#444" strokeWidth="1" />
    <circle cx="18" cy="20" r="4" fill="#ff9526" /><circle cx="19" cy="32" r="4" fill="#2ba6f3" /><circle cx="21" cy="43" r="4" fill="#5fcf4a" /><circle cx="23" cy="55" r="4" fill="#c86fdc" />
    <path d="M26 13L50 9M26 25L54 20M28 38L56 33M30 50L58 45" stroke="#d2d2d2" />
  </Art>
);

const Notes = () => (
  <Art>
    <path d="M8 9L56 2L65 61L17 69z" fill="#fbfbf7" stroke="#bbb" /><path d="M8 9L56 2L58 12L10 19z" fill="#fbd13d" />
    <path d="M11 25L59 18M12 31L60 24M13 37L61 30M14 43L62 36M15 49L63 42M16 55L64 48M17 61L65 54" stroke="#cfcfc9" />
  </Art>
);

const Messages = () => (
  <Art>
    <defs><linearGradient id="msg" x1="0" y1="0" x2="0" y2="1"><stop offset="0" stopColor="#74cbff" /><stop offset="1" stopColor="#1e86f8" /></linearGradient></defs>
    <path d="M36 7C18 7 5 19 5 33C5 43 10 50 20 55Q20 61 15 64Q25 63 30 58C52 60 68 48 68 33C68 19 54 7 36 7z" fill="url(#msg)" />
    <circle cx="48" cy="49" r="19" fill="#eaf4fb" /><path d="M52 62L61 68L60 58z" fill="#eaf4fb" />
    <circle cx="39" cy="49" r="3" fill="#1f5fae" /><circle cx="48" cy="49" r="3" fill="#1f5fae" /><circle cx="57" cy="49" r="3" fill="#1f5fae" />
  </Art>
);

const Books = () => (
  <Art>
    <defs><linearGradient id="bks" x1="0" y1="0" x2="0" y2="1"><stop offset="0" stopColor="#fba428" /><stop offset="1" stopColor="#dd4d12" /></linearGradient></defs>
    <Disc fill="url(#bks)" />
    <path d="M35 24Q26 18 16 22V50Q26 46 35 52zM37 24Q46 18 56 22V50Q46 46 37 52z" fill="#f3f1ee" />
  </Art>
);

const PhotoBooth = () => (
  <Art>
    <path d="M11 8H65V60H11z" fill="#a51420" stroke="#fff" strokeWidth="2" />
    <path d="M3 20L56 12L62 55L10 62z" fill="#a51420" stroke="#fff" strokeWidth="2" />
    <path d="M30 16L36 58M6 40L60 32" stroke="#fff" strokeWidth="2" />
    {[[19, 28], [45, 24], [23, 50]].map(([x, y], i) => (
      <g key={i}>
        <path d={`M${x - 8} ${y + 9}V${y}a8 9 0 0 1 16 0V${y + 9}z`} fill="#1d1414" />
        <ellipse cx={x} cy={y + 1} rx="4.500" ry="5.500" fill="#e0a88c" />
      </g>
    ))}
    <circle cx="53" cy="50" r="17" fill="#2c2c2e" /><circle cx="53" cy="50" r="10" fill="#15151a" stroke="#555" /><circle cx="53" cy="50" r="5" fill="#4a3f77" />
  </Art>
);

const PETALS = ["#f79a2c", "#e7d02f", "#a6cc3a", "#5cb679", "#5aa4d8", "#8577bd", "#bb6ea5", "#ea5349"];

const Photos = () => (
  <Art>
    <Disc fill="#f4f4f4" rim="#fff" />
    {PETALS.map((c, i) => (
      <ellipse key={c} cx="36" cy="22" rx="8" ry="13" fill={c} opacity="0.850" transform={`rotate(${i * 45} 36 36)`} />
    ))}
  </Art>
);

const AppStore = () => (
  <Art>
    <defs><linearGradient id="aps" x1="0" y1="0" x2="0" y2="1"><stop offset="0" stopColor="#22bdfb" /><stop offset="1" stopColor="#1c60ee" /></linearGradient></defs>
    <Disc fill="url(#aps)" />
    <path d="M39 17L22 50M33 17L51 50M15 41H40M46 41H57" stroke="#fff" strokeWidth="5" strokeLinecap="round" />
  </Art>
);

const Settings = () => (
  <Art>
    <rect x="4" y="6" width="64" height="60" rx="2" fill="#93a1a8" /><rect x="4" y="50" width="64" height="16" fill="#6f7173" />
    <circle cx="36" cy="36" r="27" fill="#2c2c2c" />
    <circle cx="36" cy="36" r="23" stroke="#b9b9b9" strokeWidth="5" strokeDasharray="3 2" />
    <circle cx="36" cy="36" r="18" stroke="#c4c4c4" strokeWidth="4" />
    <path d="M36 36H54M36 36L27 20M36 36L27 52" stroke="#c4c4c4" strokeWidth="4" /><circle cx="36" cy="36" r="5" fill="#8c8c8c" />
  </Art>
);

const News = () => (
  <Art>
    <Disc fill="#f6f5f6" rim="#f5395c" />
    <path d="M18 21Q18 18 21 18H27L54 46V51Q54 54 51 54H45L18 27z" fill="#f5395c" />
    <path d="M36 18H51Q54 18 54 21V36zM18 35L37 54H21Q18 54 18 51z" fill="#f5395c" />
  </Art>
);

const Music = () => (
  <Art>
    <defs>
      <linearGradient id="musR" x1="0" y1="0" x2="1" y2="1"><stop offset="0" stopColor="#f9486c" /><stop offset="0.500" stopColor="#b75be8" /><stop offset="1" stopColor="#2bc0f3" /></linearGradient>
      <linearGradient id="musN" x1="0" y1="0" x2="0" y2="1"><stop offset="0" stopColor="#f95468" /><stop offset="1" stopColor="#5a6df0" /></linearGradient>
    </defs>
    <Disc fill="#f5f3f8" rim="url(#musR)" />
    <path d="M27 20L51 15V45A6 6 0 1 1 47 40V26L31 29V50A6 6 0 1 1 27 45z" fill="url(#musN)" />
  </Art>
);

const Grammarly = () => (
  <Art>
    <circle cx="36" cy="36" r="36" fill="#1fb58f" />
    <path d="M52 24A20 20 0 1 0 54 44M40 38H55V52" stroke="#fff" strokeWidth="5.500" />
  </Art>
);

const DarkThumb = ({ lines }) => (
  <Art>
    <rect x="1" y="6" width="70" height="60" fill="#1f1f20" /><rect x="1" y="6" width="70" height="9" fill="#4a4b4c" />
    <rect x="36" y="10" width="5" height="2" fill="#fff" />
    {lines.map(([x, y, w], i) => <rect key={i} x={x} y={y} width={w} height="1.500" fill="#8c8c8c" />)}
    <path d="M24 28V66M48 28V66" stroke="#4c4c4c" />
    <PaperMark x={46} y={44} k={0.380} />
  </Art>
);

const LightThumb = ({ lines }) => (
  <Art>
    <rect x="1" y="16" width="70" height="40" fill="#f4f5f6" /><rect x="1" y="16" width="70" height="4" fill="#2a3036" />
    {lines.map(([x, y, w], i) => <rect key={i} x={x} y={y} width={w} height="1" fill="#8e9499" />)}
    <ChromeMark x={58} y={58} r={13} />
  </Art>
);

const ExcelThumb = () => (
  <Art>
    <rect x="1" y="17" width="70" height="38" fill="#f4f4f4" /><rect x="1" y="17" width="70" height="11" fill="#262626" /><rect x="1" y="52" width="70" height="3" fill="#222" />
    {[6, 12, 18, 24, 30, 36, 42, 48, 54, 60].map((x) => <path key={x} d={`M${x} 29V50`} stroke="#b4b4b4" />)}
    <ExcelMark x={44} y={44} k={0.380} />
  </Art>
);

const Trash = () => (
  <Art>
    <path d="M12 14L58 14L52 64Q50 70 35 70Q20 70 18 64z" fill="#4c5358" />
    <path d="M20 20L25 66M36 20V68M50 20L46 66" stroke="#737b80" strokeWidth="3" opacity="0.500" />
    <ellipse cx="35" cy="14" rx="24" ry="6" fill="#3a4044" stroke="#8b9397" strokeWidth="2" />
    <path d="M17 14L20 3L27 6L33 0L40 5L47 1L50 7L54 13L35 17z" fill="#e9e9e9" />
    <path d="M24 7L29 13M38 6L42 12M46 5L44 14" stroke="#6a4b3c" strokeWidth="3" />
  </Art>
);

/* ---------- data ---------- */

const MENUS = ["File", "Edit", "View", "Insert", "Format", "Tools", "Data", "Window", "Help"];
const TABS = ["Home", "Insert", "Draw", "Page Layout", "Formulas", "Data", "Review", "View"];
const COLS = "ABCDEFGHIJKLMNOPQRS".split("");

const RECORDS = [
  ["Bosnia", 5, 1062, 515, 282, 265, "62.91"],
  ["Greece", 5, 1301, 630, 338, 333],
  ["Albania", 5, 889, 422, 263, 247],
  ["Spain", 5, 1900, 882, 468, 550],
  ["Germany", 5, 1530, 707, 383, 440],
  ["Croatia", 5, 900, 412, 231, 257],
  ["France", 5, 1900, 864, 496, 540],
  ["England", 5, 1900, 870, 454, 576],
  ["Poland", 5, 1480, 652, 400, 428],
  ["Russia", 5, 1220, 529, 333, 358],
  ["Italy", 5, 1900, 839, 486, 575],
  ["Sweden", 5, 1210, 535, 301, 374],
  ["Cyprus", 5, 1110, 489, 260, 360],
  ["Romania", 5, 1388, 575, 391, 422],
  ["Switzerland", 5, 902, 383, 221, 298],
];
const HEADINGS = ["Country", "Number of S", "Games Playe", "Home Win", "Draw", "Home Loss"];

const DOCK_APPS = [
  ["Finder", Finder, true],
  ["Siri", () => <Art><g transform="translate(4 4)"><SiriOrb s={64} /></g></Art>],
  ["Launchpad", Launchpad],
  ["Mail", Mail],
  ["Mission Control", Mission],
  ["Safari", Safari],
  ["Maps", Maps],
  ["Contacts", Contacts],
  ["Calendar", Calendar],
  ["Reminders", Reminders],
  ["Notes", Notes],
  ["Messages", Messages],
  ["Books", Books],
  ["Photo Booth", PhotoBooth],
  ["Photos", Photos],
  ["App Store", AppStore, false, 2],
  ["System Preferences", Settings, false, 1],
  ["Chrome", () => <Art><ChromeMark /></Art>, true],
  ["News", News],
  ["iTunes", Music],
  ["Grammarly", Grammarly],
];

const DARK_A = [[4, 18, 50], [4, 21, 60], [8, 24, 44], [4, 32, 14], [12, 38, 9], [12, 45, 6], [4, 53, 14], [4, 59, 12], [52, 38, 10]];
const DARK_B = [[3, 18, 28], [3, 21, 30], [3, 24, 26], [3, 27, 30], [8, 32, 20], [3, 36, 28], [52, 18, 12], [3, 48, 40], [3, 53, 42], [3, 58, 40], [3, 62, 38]];
const DARK_C = [[4, 18, 10], [4, 21, 8], [4, 30, 42], [4, 33, 34], [4, 38, 14], [10, 44, 9], [4, 52, 12], [4, 58, 14], [52, 42, 8]];
const LIGHT_A = [[8, 23, 50], [22, 28, 14], [17, 32, 34], [17, 35, 34], [17, 38, 30], [17, 43, 34], [17, 46, 30]];
const LIGHT_B = [[12, 24, 12], [12, 30, 10], [26, 32, 30], [12, 38, 30], [12, 44, 24], [12, 48, 26], [12, 52, 20]];

/* ---------- sections ---------- */

const TopMenu = () => (
  <MenuBar>
    <MenuList>
      <MenuItem aria-label="Apple"><AppleIcon /></MenuItem>
      <MenuItem $strong>Excel</MenuItem>
      {MENUS.map((m) => <MenuItem key={m}>{m}</MenuItem>)}
    </MenuList>
    <StatusItems>
      <StatusItem><DropboxIcon /></StatusItem>
      <StatusItem $gap={20}><CloudIcon /></StatusItem>
      <StatusItem $gap={31}><TimeMachineIcon /></StatusItem>
      <StatusItem $gap={40}><BluetoothIcon /></StatusItem>
      <StatusItem $gap={30}><WifiIcon /></StatusItem>
      <StatusItem $gap={20}><VolumeIcon /></StatusItem>
      <StatusItem $gap={26}>59%</StatusItem>
      <StatusItem $gap={7}><BatteryIcon /></StatusItem>
      <StatusItem $gap={36}>Thu 5:15 PM</StatusItem>
      <StatusItem $gap={48}><SearchIcon s={30} color="#fff" width={2.4} /></StatusItem>
      <StatusItem $gap={36}><SiriOrb s={32} /></StatusItem>
      <StatusItem $gap={23}><ListIcon /></StatusItem>
    </StatusItems>
  </MenuBar>
);

const Title = () => (
  <TitleBar>
    <TitleLeft>
      <Lights>
        <Light $color="#fc5753" aria-label="Close"><LightDot /></Light>
        <Light $color="#e5bf3c" aria-label="Minimise" />
        <Light $color="#57c038" aria-label="Zoom" />
      </Lights>
      <AutoSave>
        AutoSave
        <Toggle>
          <ToggleText>OFF</ToggleText>
          <ToggleInput type="checkbox" />
        </Toggle>
      </AutoSave>
      <QuickTools>
        <IconButton aria-label="Home"><HomeIcon /></IconButton>
        <IconButton $ml={18} aria-label="Save"><SaveIcon /></IconButton>
        <IconButton $ml={22} $gap={13} aria-label="Undo"><UndoIcon /><Caret /></IconButton>
        <IconButton $ml={17} aria-label="Redo"><RedoIcon /></IconButton>
        <IconButton $ml={27} aria-label="Customise toolbar"><CustomizeIcon /></IconButton>
      </QuickTools>
    </TitleLeft>
    <DocTitle><DocIcon />Thesis</DocTitle>
    <TitleRight>
      <SearchBox>
        <SearchIcon s={22} color="#3a3a3a" width={2.6} />
        <IconButton $ml={3} aria-label="Search options"><Caret color="#3a3a3a" /></IconButton>
        <SearchInput aria-label="Search sheet" defaultValue="add-ins" />
        <IconButton aria-label="Previous"><Tri dir="left" w={17} h={20} color="#dadada" /></IconButton>
        <IconButton $ml={23} aria-label="Next"><Tri dir="right" w={17} h={20} color="#dadada" /></IconButton>
        <SearchRule />
        <IconButton aria-label="Clear search"><ClearIcon /></IconButton>
      </SearchBox>
      <IconButton $ml={27} $gap={12} aria-label="Feedback"><SmileIcon /><Caret /></IconButton>
    </TitleRight>
  </TitleBar>
);

const Picker = ({ w, label, value }) => (
  <SelectWrap $w={w}>
    <Select aria-label={label} defaultValue={value}><option>{value}</option></Select>
    <Caret />
  </SelectWrap>
);

const Labelled = ({ icon, children }) => (
  <TextButton>{icon}<ButtonText>{children}</ButtonText><Caret /></TextButton>
);

const RibbonArea = () => (
  <>
    <TabRow>
      <RibbonTabs>
        {TABS.map((t, i) => <RibbonTab key={t} $active={i === 0}>{t}</RibbonTab>)}
      </RibbonTabs>
      <TabActions>
        <ActionButton><ShareIcon />Share</ActionButton>
        <ActionButton><CommentIcon />Comments</ActionButton>
      </TabActions>
    </TabRow>
    <Ribbon>
      <Group $w={206} $pl={28}>
        <BigButton $w={84} $dim><BigIcon><PasteIcon /><Caret color="#7c7c7c" /></BigIcon><BigLabel>Paste</BigLabel></BigButton>
        <Column $ml={12}>
          <Line><IconButton aria-label="Cut"><CutIcon /></IconButton></Line>
          <Line><IconButton $gap={12} aria-label="Copy"><CopyIcon /><Caret /></IconButton></Line>
          <Line><IconButton aria-label="Format painter"><PainterIcon /></IconButton></Line>
        </Column>
      </Group>
      <GroupRule />
      <Group $w={538} $pl={20}>
        <TallColumn>
          <TallLine>
            <Picker w={281} label="Font" value="Calibri (Body)" />
            <Picker w={108} label="Font size" value="12" />
            <IconButton $ml={13} aria-label="Increase font size"><SizeIcon up /></IconButton>
            <IconButton $ml={26} aria-label="Decrease font size"><SizeIcon /></IconButton>
          </TallLine>
          <TallLine>
            <LetterButton $w={48} $bold>B</LetterButton>
            <LetterButton $w={52} $italic>I</LetterButton>
            <LetterButton $w={52} $under>U</LetterButton>
            <IconButton $ml={6} aria-label="Underline options"><Caret /></IconButton>
            <SmallRule $ml={23} />
            <IconButton $ml={23} $gap={16} aria-label="Borders"><BordersIcon /><Caret /></IconButton>
            <SmallRule $ml={23} />
            <IconButton $ml={23} $gap={14} aria-label="Fill colour"><FillIcon /><Caret /></IconButton>
            <IconButton $ml={18} $gap={14} aria-label="Font colour"><FontColorIcon /><Caret /></IconButton>
          </TallLine>
        </TallColumn>
      </Group>
      <GroupRule />
      <Group $w={252} $pl={18}>
        <Column>
          <Line>
            <AlignButton aria-label="Top"><Rows h={32} lines={[[0, 0, 28], [5, 8, 18], [0, 16, 28]]} /></AlignButton>
            <AlignButton aria-label="Middle"><Rows h={32} lines={[[0, 6, 28], [5, 14, 18], [0, 22, 28]]} /></AlignButton>
            <AlignButton $on aria-label="Bottom"><Rows h={32} lines={[[0, 14, 28], [5, 22, 18], [0, 30, 28]]} /></AlignButton>
            <IconButton $ml={12} $gap={12} aria-label="Wrap text"><WrapIcon /><Caret /></IconButton>
          </Line>
          <Line>
            <AlignButton aria-label="Left"><Rows lines={[[0, 0, 28], [0, 8, 20], [0, 16, 28], [0, 24, 20]]} /></AlignButton>
            <AlignButton aria-label="Centre"><Rows lines={[[0, 0, 28], [4, 8, 20], [0, 16, 28], [4, 24, 20]]} /></AlignButton>
            <AlignButton aria-label="Right"><Rows lines={[[0, 0, 28], [8, 8, 20], [0, 16, 28], [8, 24, 20]]} /></AlignButton>
            <IconButton $ml={8} $gap={14} aria-label="Merge"><MergeIcon /><Caret /></IconButton>
          </Line>
          <Line>
            {[false, true].map((right) => (
              <AlignButton key={String(right)} aria-label={right ? "Increase indent" : "Decrease indent"}>
                <Svg w={28} h={26}>
                  <path d="M0 1H28M16 9H28M16 17H28M0 25H28" stroke="#d8d8d8" strokeWidth="2" />
                  <path d={right ? "M0 13H11M6 8L11 13L6 18" : "M12 13H1M6 8L1 13L6 18"} stroke="#3f9ade" strokeWidth="2.400" />
                </Svg>
              </AlignButton>
            ))}
            <SmallRule $ml={14} />
            <IconButton $ml={20} $gap={12} aria-label="Orientation"><OrientIcon /><Caret /></IconButton>
          </Line>
        </Column>
      </Group>
      <GroupRule />
      <Group $w={350} $pl={20}>
        <TallColumn>
          <TallLine><Picker w={310} label="Number format" value="General" /></TallLine>
          <TallLine>
            <IconButton $ml={15} $gap={23} aria-label="Currency"><DollarIcon /><Caret /></IconButton>
            <IconButton $ml={18} aria-label="Percent"><PercentIcon /></IconButton>
            <IconButton $ml={30} aria-label="Comma style"><CommaIcon /></IconButton>
            <SmallRule $ml={33} />
            <IconButton $ml={23} aria-label="Increase decimal"><DecimalIcon more /></IconButton>
            <IconButton $ml={22} aria-label="Decrease decimal"><DecimalIcon /></IconButton>
          </TallLine>
        </TallColumn>
      </Group>
      <GroupRule />
      <Group $w={352} $pl={26}>
        <Column>
          <Labelled icon={<CondIcon />}>Conditional Formatting</Labelled>
          <Labelled icon={<FormatTableIcon />}>Format as Table</Labelled>
          <Labelled icon={<CellStylesIcon />}>Cell Styles</Labelled>
        </Column>
      </Group>
      <GroupRule />
      <Group $w={192} $pl={26}>
        <Column>
          <Labelled icon={<InsertIcon />}>Insert</Labelled>
          <Labelled icon={<DeleteIcon />}>Delete</Labelled>
          <Labelled icon={<FormatIcon />}>Format</Labelled>
        </Column>
      </Group>
      <GroupRule />
      <Group $w={308} $pl={26}>
        <Column>
          <Line><IconButton $gap={12} aria-label="AutoSum"><SigmaIcon /><Caret /></IconButton></Line>
          <Line><IconButton $gap={12} aria-label="Fill"><FillDownIcon /><Caret /></IconButton></Line>
          <Line><IconButton $gap={12} aria-label="Clear"><ClearXIcon /><Caret /></IconButton></Line>
        </Column>
        <BigButton $w={82} $ml={18}><BigIcon $gap={14}><SortIcon /><Caret /></BigIcon><BigLabel>Sort &amp;<br />Filter</BigLabel></BigButton>
        <BigButton $w={84} $ml={16}><BigIcon $gap={12}><FindIcon /><Caret /></BigIcon><BigLabel>Find &amp;<br />Select</BigLabel></BigButton>
      </Group>
      <GroupRule />
      <Group $w={112} $center>
        <BigButton $w={80}><BigIcon><IdeasIcon /></BigIcon><BigLabel>Ideas</BigLabel></BigButton>
      </Group>
      <GroupRule />
      <Group $w={160} $pl={21}>
        <BigButton $w={114} $dim><BigIcon><SensIcon /><Caret color="#6c6c6c" /></BigIcon><BigLabel>Sensitivity</BigLabel></BigButton>
      </Group>
    </Ribbon>
  </>
);

const Formula = () => (
  <FormulaBar>
    <NameBox>
      <NameInput aria-label="Name box" defaultValue="L6" />
      <Svg w={14} h={36}>
        <polygon points="0,12 7,0 14,12" fill="#bdbdbd" />
        <polygon points="0,24 14,24 7,36" fill="#bdbdbd" />
      </Svg>
    </NameBox>
    <FormulaTools>
      <IconButton aria-label="Cancel"><Svg w={20} h={20}><path d="M1 1L19 19M19 1L1 19" stroke="#585858" strokeWidth="3.600" /></Svg></IconButton>
      <IconButton $ml={36} aria-label="Enter"><Svg w={28} h={20}><path d="M1 10L10 18L27 1" stroke="#585858" strokeWidth="3.600" /></Svg></IconButton>
      <FxText>fx</FxText>
    </FormulaTools>
    <FormulaInput aria-label="Formula" />
    <FormulaToggle aria-label="Expand formula bar"><Tri dir="down" w={14} h={12} color="#cfcfcf" /></FormulaToggle>
  </FormulaBar>
);

const cellsOf = (row) => {
  if (row === 1) {
    return [
      ...HEADINGS.map((h) => <Cell key={h}>{h}</Cell>),
      <Cell key="adv" colSpan={2}>Home Advantage (%)</Cell>,
      ...COLS.slice(8).map((c) => <Cell key={c} />),
      <Cell key="rest" />,
    ];
  }
  const rec = RECORDS[row - 2] || [];
  return [
    ...COLS.map((c, i) =>
      row === 6 && c === "L" ? (
        <Cell key={c} $on><Selection /><FillHandle /></Cell>
      ) : (
        <Cell key={c} $num={i > 0}>{rec[i]}</Cell>
      )
    ),
    <Cell key="rest" />,
  ];
};

const Sheet = () => (
  <SheetArea>
    <Grid>
      <colgroup>
        <Col $w={44} />
        {COLS.map((c) => <Col key={c} $w={130} />)}
        <Col />
      </colgroup>
      <thead>
        <tr>
          <Corner aria-label="Select all"><Svg w={30} h={30}><polygon points="0,30 30,0 30,30" fill="#565656" /></Svg></Corner>
          {COLS.map((c) => <ColHead key={c} $on={c === "L"}>{c}</ColHead>)}
          <ColHead />
        </tr>
      </thead>
      <tbody>
        {Array.from({ length: 31 }, (_, i) => i + 1).map((r) => (
          <tr key={r}>
            <RowHead $on={r === 6}>{r}</RowHead>
            {cellsOf(r)}
          </tr>
        ))}
      </tbody>
    </Grid>
  </SheetArea>
);

const Bottom = () => (
  <>
    <SheetTabs>
      <TabNav>
        <IconButton aria-label="Previous sheet"><Tri dir="left" w={14} h={20} color="#6a6a6a" /></IconButton>
        <IconButton aria-label="Next sheet"><Tri dir="right" w={14} h={20} color="#6a6a6a" /></IconButton>
      </TabNav>
      {["Sheet2", "Sheet1", "Sheet3", "Sheet4", "Sheet6"].map((s) => (
        <SheetTab key={s} $active={s === "Sheet3"}>{s}</SheetTab>
      ))}
      <AddTab aria-label="Add sheet"><PlusMark s={20} w={4} color="#b5b5b5" /></AddTab>
    </SheetTabs>
    <StatusBar>
      <Ready>Ready</Ready>
      <ViewButton $on aria-label="Normal view"><GridViewIcon /></ViewButton>
      <ViewButton aria-label="Page layout view"><PageViewIcon /></ViewButton>
      <ViewButton aria-label="Page break view"><BreakViewIcon /></ViewButton>
      <ZoomControl>
        <IconButton aria-label="Zoom out"><Svg w={16} h={16}><path d="M0 8H16" stroke="#f2f2f2" strokeWidth="4" /></Svg></IconButton>
        <ZoomRange type="range" min="0" max="100" defaultValue="50" aria-label="Zoom" />
        <IconButton aria-label="Zoom in"><PlusMark s={16} w={4} color="#f2f2f2" /></IconButton>
      </ZoomControl>
      <ZoomText>100%</ZoomText>
    </StatusBar>
  </>
);

const DockBar = () => (
  <DockRow>
    <Dock>
      <DockApps>
        {DOCK_APPS.map(([name, Drawing, on, badge]) => (
          <DockItem key={name} aria-label={name}>
            <Drawing />
            {on && <Running />}
            {badge && <Badge>{badge}</Badge>}
          </DockItem>
        ))}
      </DockApps>
      <DockRule $h={48} $m="22px 15px 0 19px" />
      <DockItem aria-label="TextEdit"><Art><PaperMark /></Art><Running /></DockItem>
      <DockItem aria-label="Excel"><Art><ExcelMark /></Art><Running /></DockItem>
      <DockRule $h={72} $m="10px 16px 0 19px" />
      <DockItem aria-label="Draft one"><DarkThumb lines={DARK_A} /></DockItem>
      <DockItem aria-label="Draft two"><DarkThumb lines={DARK_B} /></DockItem>
      <DockItem aria-label="Draft three"><DarkThumb lines={DARK_C} /></DockItem>
      <DockItem aria-label="Browser one"><LightThumb lines={LIGHT_A} /></DockItem>
      <DockItem aria-label="Browser two"><LightThumb lines={LIGHT_B} /></DockItem>
      <DockItem aria-label="Workbook"><ExcelThumb /></DockItem>
      <DockItem aria-label="Trash"><Trash /></DockItem>
    </Dock>
  </DockRow>
);

export default function App() {
  return (
    <Desktop>
      <Global />
      <TopMenu />
      <WindowFrame>
        <Title />
        <RibbonArea />
        <Formula />
        <Sheet />
        <Bottom />
      </WindowFrame>
      <Behind aria-hidden="true">value needed for the next column</Behind>
      <DockBar />
    </Desktop>
  );
}
